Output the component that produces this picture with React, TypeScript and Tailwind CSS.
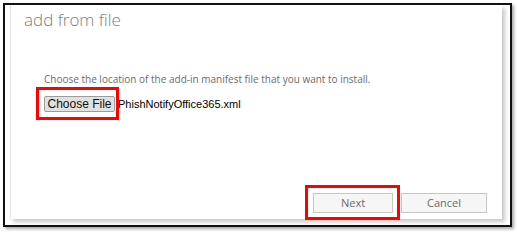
export default function App() {
  return (
    <div className="w-[517px] h-[234px] bg-white overflow-hidden" style={{ fontFamily: "'Liberation Sans', Arial, sans-serif" }}>
      <div className="ml-[3px] mt-[3px] w-[509px] h-[224px] border-2 border-[#111] bg-white shadow-[2px_2px_3px_rgba(0,0,0,0.35)] overflow-hidden">
        <div className="ml-[5px] w-[492px] h-[214px] bg-white border-l border-[#e4e4e4] shadow-[3px_3px_4px_rgba(0,0,0,0.22)] flex flex-col">
          <h1 className="mt-[4px] ml-[13px] text-[17px] leading-[22px] font-light text-[#808080]" style={{ fontFamily: "'Open Sans', sans-serif" }}>
            add from file
          </h1>

          <p className="mt-[41px] ml-[33px] text-[10px] leading-[14px] text-[#6b6b6b]" style={{ fontFamily: "'Open Sans', sans-serif" }}>
            Choose the location of the add-in manifest file that you want to install.
          </p>

          <div className="mt-[1px] ml-[25px] flex items-center">
            <div className="flex border-[3px] border-[#f00] pl-[5px] pr-[1px] pt-[6px] pb-[5px]">
              <button className="flex items-center justify-center h-[16px] w-[71px] bg-[#e1e1e1] border border-[#9c9c9c] rounded-[2px] text-[12px] leading-[13px] text-[#111]">
                Choose File
              </button>
            </div>
            <span className="text-[11px] leading-[14px] text-black -ml-px">PhishNotifyOffice365.xml</span>
          </div>

          <div className="mt-auto mb-[-1px] ml-[294px] flex items-start">
            <div className="flex border-[3px] border-[#f00] pl-[5px] pr-[4px] pt-[5px] pb-[4px]">
              <button className="flex items-center justify-center w-[80px] h-[20px] bg-[#f6f6f6] border border-[#c6c6c6] text-[11px] leading-[14px] text-[#6a6a6a]" style={{ fontFamily: "'Open Sans', sans-serif" }}>
                Next
              </button>
            </div>
            <button className="flex items-center justify-center mt-[8px] ml-px w-[86px] h-[20px] bg-[#f6f6f6] border border-[#c6c6c6] text-[11px] leading-[14px] text-[#6a6a6a]" style={{ fontFamily: "'Open Sans', sans-serif" }}>
              Cancel
            </button>
          </div>
        </div>
      </div>
    </div>
  );
}
